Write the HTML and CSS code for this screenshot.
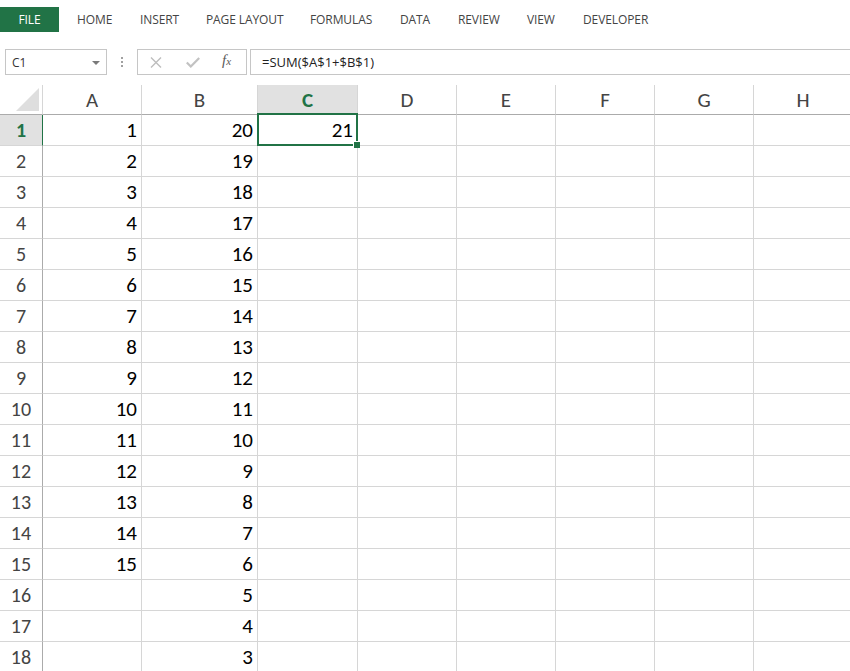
FILE: index.html
```html
<!DOCTYPE html>
<html>
<head>
<meta charset="utf-8">
<title>Excel</title>
<link rel="stylesheet" href="styles.css">
</head>
<body>
<div class="tabs">
  <div class="tab file">FILE</div>
  <div class="tab w-home">HOME</div>
  <div class="tab w-insert">INSERT</div>
  <div class="tab w-page">PAGE LAYOUT</div>
  <div class="tab w-formulas">FORMULAS</div>
  <div class="tab w-data">DATA</div>
  <div class="tab w-review">REVIEW</div>
  <div class="tab w-view">VIEW</div>
  <div class="tab">DEVELOPER</div>
</div>

<div class="fbar">
  <div class="namebox">
    <span>C1</span>
    <svg class="dd" width="8" height="4" viewBox="0 0 8 4"><polygon points="0,0 8,0 4,4" fill="#7a7a7a"/></svg>
  </div>
  <div class="grip"><i></i><i></i><i></i></div>
  <div class="btns">
    <svg class="ico-x" width="12" height="11" viewBox="0 0 12 11"><path d="M1 0.5 L11 10.5 M11 0.5 L1 10.5" stroke="#bdbdbd" stroke-width="1.4" fill="none"/></svg>
    <svg class="ico-ok" width="14" height="11" viewBox="0 0 14 11"><path d="M0.8 5.5 L4.8 9.5 L13.2 1" stroke="#c2c2c2" stroke-width="2.2" fill="none"/></svg>
    <span class="fx">f<span class="fxx">x</span></span>
  </div>
  <div class="formula">=SUM($A$1+$B$1)</div>
</div>

<div class="clip">
<div class="sheet">
  <div class="corner"><svg width="23" height="23" viewBox="0 0 23 23"><polygon points="0,23 23,0 23,23" fill="#dedede"/></svg></div>
  <div class="ch">A</div><div class="ch">B</div><div class="ch selc">C</div><div class="ch">D</div><div class="ch">E</div><div class="ch">F</div><div class="ch">G</div><div class="ch">H</div>

  <div class="rh selr">1</div><div class="c">1</div><div class="c">20</div><div class="c sel">21</div><div class="c"></div><div class="c"></div><div class="c"></div><div class="c"></div><div class="c"></div>
  <div class="rh">2</div><div class="c">2</div><div class="c">19</div><div class="c"></div><div class="c"></div><div class="c"></div><div class="c"></div><div class="c"></div><div class="c"></div>
  <div class="rh">3</div><div class="c">3</div><div class="c">18</div><div class="c"></div><div class="c"></div><div class="c"></div><div class="c"></div><div class="c"></div><div class="c"></div>
  <div class="rh">4</div><div class="c">4</div><div class="c">17</div><div class="c"></div><div class="c"></div><div class="c"></div><div class="c"></div><div class="c"></div><div class="c"></div>
  <div class="rh">5</div><div class="c">5</div><div class="c">16</div><div class="c"></div><div class="c"></div><div class="c"></div><div class="c"></div><div class="c"></div><div class="c"></div>
  <div class="rh">6</div><div class="c">6</div><div class="c">15</div><div class="c"></div><div class="c"></div><div class="c"></div><div class="c"></div><div class="c"></div><div class="c"></div>
  <div class="rh">7</div><div class="c">7</div><div class="c">14</div><div class="c"></div><div class="c"></div><div class="c"></div><div class="c"></div><div class="c"></div><div class="c"></div>
  <div class="rh">8</div><div class="c">8</div><div class="c">13</div><div class="c"></div><div class="c"></div><div class="c"></div><div class="c"></div><div class="c"></div><div class="c"></div>
  <div class="rh">9</div><div class="c">9</div><div class="c">12</div><div class="c"></div><div class="c"></div><div class="c"></div><div class="c"></div><div class="c"></div><div class="c"></div>
  <div class="rh">10</div><div class="c">10</div><div class="c">11</div><div class="c"></div><div class="c"></div><div class="c"></div><div class="c"></div><div class="c"></div><div class="c"></div>
  <div class="rh">11</div><div class="c">11</div><div class="c">10</div><div class="c"></div><div class="c"></div><div class="c"></div><div class="c"></div><div class="c"></div><div class="c"></div>
  <div class="rh">12</div><div class="c">12</div><div class="c">9</div><div class="c"></div><div class="c"></div><div class="c"></div><div class="c"></div><div class="c"></div><div class="c"></div>
  <div class="rh">13</div><div class="c">13</div><div class="c">8</div><div class="c"></div><div class="c"></div><div class="c"></div><div class="c"></div><div class="c"></div><div class="c"></div>
  <div class="rh">14</div><div class="c">14</div><div class="c">7</div><div class="c"></div><div class="c"></div><div class="c"></div><div class="c"></div><div class="c"></div><div class="c"></div>
  <div class="rh">15</div><div class="c">15</div><div class="c">6</div><div class="c"></div><div class="c"></div><div class="c"></div><div class="c"></div><div class="c"></div><div class="c"></div>
  <div class="rh">16</div><div class="c"></div><div class="c">5</div><div class="c"></div><div class="c"></div><div class="c"></div><div class="c"></div><div class="c"></div><div class="c"></div>
  <div class="rh">17</div><div class="c"></div><div class="c">4</div><div class="c"></div><div class="c"></div><div class="c"></div><div class="c"></div><div class="c"></div><div class="c"></div>
  <div class="rh">18</div><div class="c"></div><div class="c">3</div><div class="c"></div><div class="c"></div><div class="c"></div><div class="c"></div><div class="c"></div><div class="c"></div>
</div>
</div>
</body>
</html>
```
FILE: styles.css
```css
html, body {
  margin: 0;
  padding: 0;
  background: #ffffff;
  overflow: hidden;
}
body {
  width: 850px;
  height: 671px;
  font-family: "Open Sans", "Noto Sans", sans-serif;
}

/* ribbon tabs */
.tabs {
  display: flex;
  align-items: center;
  padding-top: 7px;
  height: 25px;
}
.tab {
  font-size: 12px;
  color: #444444;
  line-height: 25px;
  height: 25px;
  white-space: nowrap;
  letter-spacing: -0.1px;
}
.tab.file {
  width: 59px;
  margin-right: 18px;
  background: #217346;
  color: #ffffff;
  text-align: center;
}
.w-home { width: 63px; }
.w-insert { width: 66px; }
.w-page { width: 104px; }
.w-formulas { width: 90px; }
.w-data { width: 58px; }
.w-review { width: 69px; }
.w-view { width: 56px; }

/* formula bar */
.fbar {
  display: flex;
  margin-top: 17px;
  height: 26px;
}
.namebox {
  margin-left: 5px;
  width: 102px;
  box-sizing: border-box;
  border: 1px solid #c6c6c6;
  display: flex;
  align-items: center;
  justify-content: space-between;
  padding: 0 6px 0 6px;
  font-size: 12px;
  color: #333333;
}
.namebox .dd {
  margin-top: 1px;
}
.grip {
  width: 30px;
  display: flex;
  flex-direction: column;
  align-items: center;
  justify-content: center;
  gap: 2px;
}
.grip i {
  display: block;
  width: 2px;
  height: 2px;
  background: #a0a0a0;
}
.btns {
  width: 110px;
  box-sizing: border-box;
  border: 1px solid #c6c6c6;
  display: flex;
  align-items: center;
  padding-left: 12px;
}
.ico-x { margin-top: 0px; }
.ico-ok { margin-left: 24px; margin-top: 1px; }
.fx {
  margin-left: 22px;
  font-family: "Liberation Serif", "DejaVu Serif", serif;
  font-style: italic;
  font-size: 15px;
  color: #5a5a5a;
  line-height: 1;
  margin-top: -3px;
}
.fxx {
  font-size: 11px;
}
.formula {
  margin-left: 3px;
  flex: 1;
  box-sizing: border-box;
  border: 1px solid #c6c6c6;
  border-right: none;
  padding-left: 11px;
  font-size: 13px;
  color: #222222;
  line-height: 24px;
}

/* sheet */
.clip {
  margin-top: 10px;
  width: 850px;
  overflow: hidden;
}
.sheet {
  display: grid;
  grid-template-columns: 43px 99px 116px 100px 99px 99px 99px 99px 99px;
  grid-template-rows: 30px repeat(18, 31px);
  width: max-content;
  font-family: "Carlito", "Lato", sans-serif;
}
.sheet > div {
  box-sizing: border-box;
  border-right: 1px solid #d6d6d6;
  border-bottom: 1px solid #d6d6d6;
  display: flex;
  align-items: center;
}
.corner {
  justify-content: flex-end;
  align-items: flex-end !important;
  padding: 0 3px 3px 0;
  border-bottom-color: #ababab !important;
}
.sheet > .ch {
  justify-content: center;
  font-size: 21px;
  color: #444444;
  border-bottom-color: #ababab;
}
.sheet > .ch.selc {
  background: #e1e1e1;
  color: #217346;
  font-weight: bold;
  border-bottom: 1px solid #217346;
}
.sheet > .rh {
  justify-content: center;
  font-size: 20px;
  color: #444444;
  border-right-color: #ababab;
}
.sheet > .rh.selr {
  background: #e1e1e1;
  color: #217346;
  font-weight: bold;
  border-right: 1px solid #217346;
}
.sheet > .c {
  justify-content: flex-end;
  padding-right: 4px;
  font-size: 21px;
  color: #000000;
}
.sheet > .c.sel {
  position: relative;
}
.sel::after {
  content: "";
  position: absolute;
  left: -1px;
  top: -2px;
  width: 101px;
  height: 33px;
  box-sizing: border-box;
  border: 2px solid #217346;
}
.sel::before {
  content: "";
  position: absolute;
  left: 95px;
  top: 26px;
  width: 7px;
  height: 7px;
  box-sizing: border-box;
  background: #217346;
  border-left: 1px solid #ffffff;
  border-top: 1px solid #ffffff;
  z-index: 2;
}
```
